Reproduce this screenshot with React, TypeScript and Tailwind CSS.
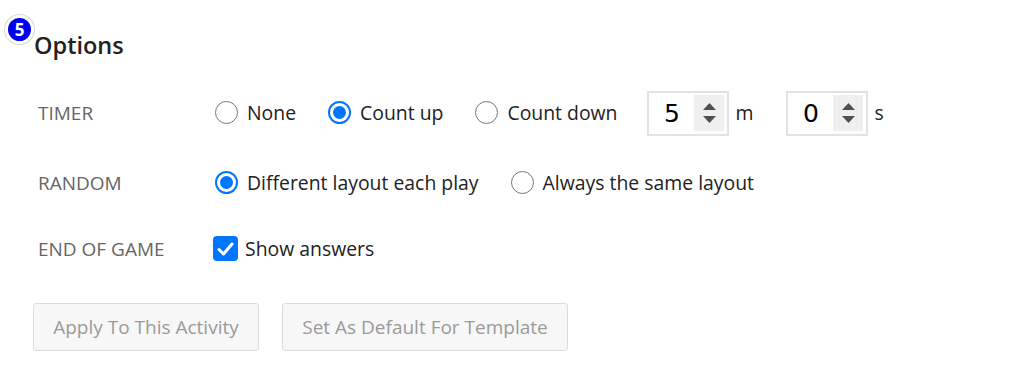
import { useState } from "react";

const font = { fontFamily: "'Open Sans', 'Noto Sans', sans-serif" };

function Radio({ checked, label, onClick }: { checked: boolean; label: string; onClick: () => void }) {
  return (
    <button type="button" onClick={onClick} className="flex items-center gap-[9px] text-[19.4px] text-[#222]">
      <span
        className={`flex h-[23px] w-[23px] items-center justify-center rounded-full border bg-white ${
          checked ? "border-[#0075ff] border-2" : "border-[#767676]"
        }`}
      >
        {checked && <span className="h-[13px] w-[13px] rounded-full bg-[#0075ff]" />}
      </span>
      <span>{label}</span>
    </button>
  );
}

function NumberBox({ value, unit }: { value: number; unit: string }) {
  return (
    <div className="flex items-center gap-[6px]">
      <div className="flex h-[45px] w-[82px] items-center border-2 border-[#e2e2e2] bg-white pr-[3px]">
        <span
          className="flex-1 text-center text-[25px] leading-none text-black"
          style={{ fontFamily: "'DejaVu Sans', sans-serif" }}
        >
          {value}
        </span>
        <div className="flex h-[36px] w-[30px] flex-col items-center justify-center gap-[6px] bg-[#efefef]">
          <svg width="13" height="7" viewBox="0 0 13 7">
            <polygon points="6.5,0 13,7 0,7" fill="#505050" />
          </svg>
          <svg width="13" height="7" viewBox="0 0 13 7">
            <polygon points="0,0 13,0 6.5,7" fill="#505050" />
          </svg>
        </div>
      </div>
      <span className="text-[19.4px] text-[#222]">{unit}</span>
    </div>
  );
}

export default function App() {
  const [timer, setTimer] = useState("up");
  const [random, setRandom] = useState("different");
  const [showAnswers, setShowAnswers] = useState(true);

  return (
    <div className="h-[381px] w-[1029px] bg-white" style={font}>
      <div className="relative pl-[34px] pt-[29px]">
        {/* step badge */}
        <span className="absolute left-[5px] top-[15px] flex h-[29px] w-[29px] items-center justify-center rounded-full border-[3px] border-white bg-[#0000f0] text-[17px] font-bold leading-none text-white shadow-[0_0_0_1px_#d8d8d8]">
          5
        </span>
        <h2 className="text-[23.5px] font-semibold leading-[32px] text-[#222]">Options</h2>
      </div>

      <div className="mt-[28px] flex flex-col pl-[38px]">
        <div className="flex h-[48px] items-center">
          <div className="w-[177px] text-[19px] text-[#666]">TIMER</div>
          <div className="flex items-center gap-[32px]">
            <Radio checked={timer === "none"} label="None" onClick={() => setTimer("none")} />
            <Radio checked={timer === "up"} label="Count up" onClick={() => setTimer("up")} />
            <Radio checked={timer === "down"} label="Count down" onClick={() => setTimer("down")} />
            <div className="flex items-center gap-[33px] -ml-[2px]">
              <NumberBox value={5} unit="m" />
              <NumberBox value={0} unit="s" />
            </div>
          </div>
        </div>

        <div className="mt-[22px] flex h-[48px] items-center">
          <div className="w-[177px] text-[19px] text-[#666]">RANDOM</div>
          <div className="flex items-center gap-[32px]">
            <Radio
              checked={random === "different"}
              label="Different layout each play"
              onClick={() => setRandom("different")}
            />
            <Radio
              checked={random === "same"}
              label="Always the same layout"
              onClick={() => setRandom("same")}
            />
          </div>
        </div>

        <div className="mt-[18px] flex h-[48px] items-center">
          <div className="w-[175px] text-[19px] text-[#666]">END OF GAME</div>
          <button
            type="button"
            onClick={() => setShowAnswers(!showAnswers)}
            className="flex items-center gap-[7px] text-[19.4px] text-[#222]"
          >
            <span
              className={`flex h-[25px] w-[25px] items-center justify-center rounded-[4px] ${
                showAnswers ? "bg-[#0075ff]" : "border border-[#767676] bg-white"
              }`}
            >
              {showAnswers && (
                <svg width="17" height="14" viewBox="0 0 17 14">
                  <path d="M2 7.5 L6.5 12 L15 2" fill="none" stroke="white" strokeWidth="3" strokeLinecap="round" strokeLinejoin="round" />
                </svg>
              )}
            </span>
            <span>Show answers</span>
          </button>
        </div>
      </div>

      <div className="mt-[30px] flex gap-[23px] pl-[33px]">
        <button
          type="button"
          disabled
          className="h-[48px] w-[226px] rounded-[3px] border border-[#dcdcdc] bg-[#f7f7f7] text-[19px] text-[#9a9a9a]"
        >
          Apply To This Activity
        </button>
        <button
          type="button"
          disabled
          className="h-[48px] w-[286px] rounded-[3px] border border-[#dcdcdc] bg-[#f7f7f7] text-[19px] text-[#9a9a9a]"
        >
          Set As Default For Template
        </button>
      </div>
    </div>
  );
}
